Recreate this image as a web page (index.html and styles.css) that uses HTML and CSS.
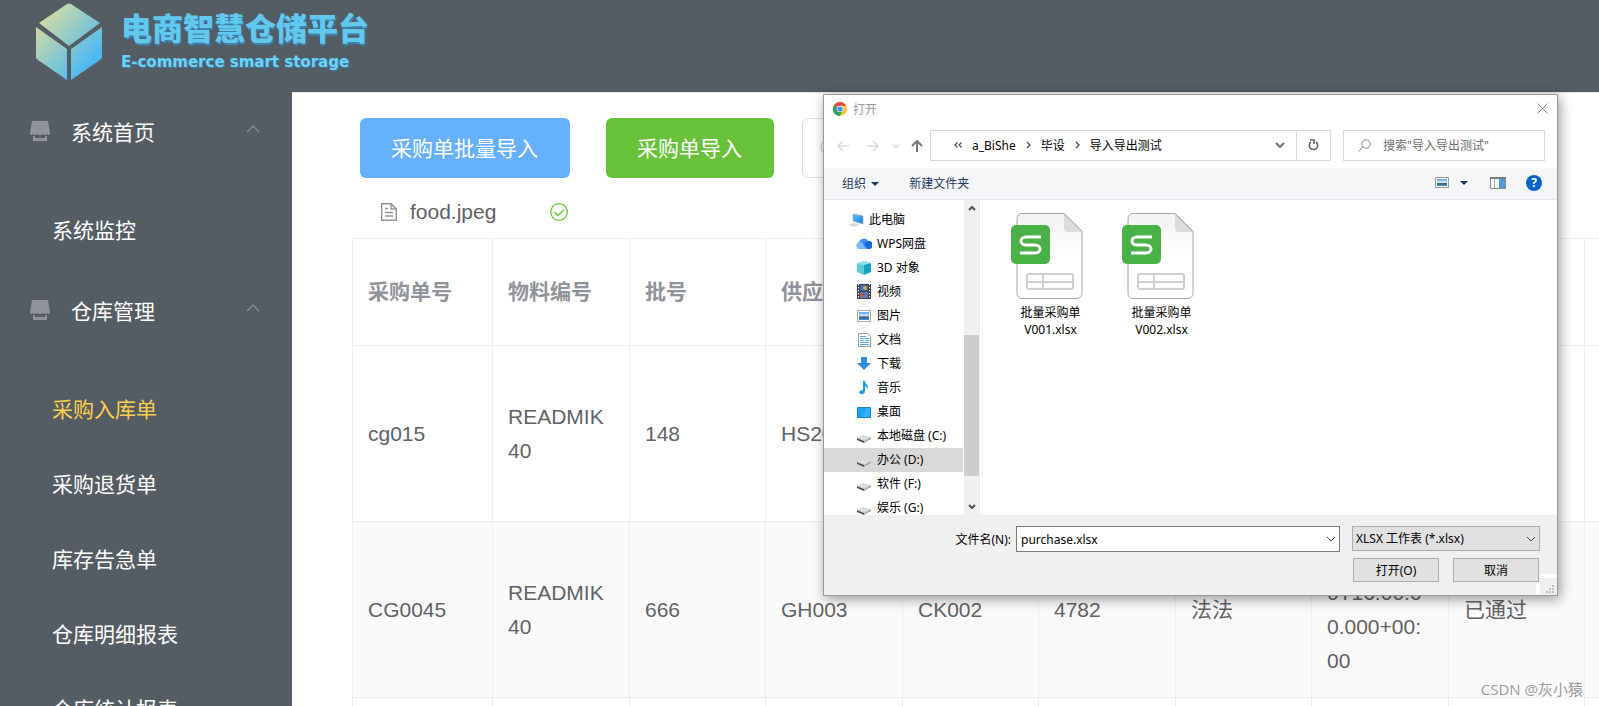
FILE: index.html
```html
<!DOCTYPE html>
<html lang="zh-CN">
  <head>
    <meta charset="UTF-8" />
    <meta name="viewport" content="width=device-width, initial-scale=1.0" />
    <title>电商智慧仓储平台</title>
    <link rel="stylesheet" href="styles.css">
  </head>
  <body>
    <!-- 公用图标 -->
    <svg class="sprite" aria-hidden="true">
      <defs>
        <linearGradient id="cube" gradientUnits="userSpaceOnUse" x1="2" y1="10" x2="58" y2="58">
          <stop offset="0" stop-color="#dde09b" />
          <stop offset="1" stop-color="#4cb8f5" />
        </linearGradient>
        <linearGradient id="paper" x1="0" y1="0" x2="0" y2="1">
          <stop offset="0" stop-color="#f2f2f2" />
          <stop offset="0.5" stop-color="#fff" />
        </linearGradient>
        <linearGradient id="sky" x1="0" y1="0" x2="0" y2="1">
          <stop offset="0" stop-color="#5aa0e8" />
          <stop offset="0.5" stop-color="#d8ecf8" />
          <stop offset="0.6" stop-color="#2f5f6a" />
          <stop offset="1" stop-color="#4b93c9" />
        </linearGradient>
        <linearGradient id="blue" x1="0" y1="0" x2="1" y2="1">
          <stop offset="0" stop-color="#5db8f2" />
          <stop offset="1" stop-color="#1b86dc" />
        </linearGradient>
      </defs>
      <symbol id="shop" viewBox="0 0 20 20">
        <path fill="#909399" d="M2 0h16l2 12c0 1-.5 2-1.500 2l-1.500-1-1.500 1h-1L13 13l-1.500 1h-1L10 13.500l-.5.500h-1L7 13l-1.500 1h-1L3 13l-1.500 1C.5 14 0 13 0 12zM3 15h2v2h10v-2h2v5H3z" />
      </symbol>
      <symbol id="up" viewBox="0 0 14 8">
        <path fill="none" stroke="#909399" stroke-width="1.2" d="M1 7l6-6 6 6" />
      </symbol>
      <symbol id="down" viewBox="0 0 10 6">
        <path fill="none" stroke="currentColor" d="M1 1l4 4 4-4" />
      </symbol>
      <symbol id="drive" viewBox="0 0 16 16">
        <path fill="#dcdcdc" d="M1 11l6-3 8 2-7 4z" />
        <path fill="#4c4f50" d="M1 11l7 3v2l-7-3z" />
        <path fill="#a9acad" d="M8 14l7-4v2l-7 4z" />
        <path fill="#35c46a" d="M2 12.500h1v1H2z" />
      </symbol>
      <symbol id="sheet" viewBox="0 0 80 88">
        <path fill="url(#paper)" stroke="#a6a6a6" d="M11 1.500h42l18 18v62a5 5 0 0 1-5 5H11a5 5 0 0 1-5-5v-75a5 5 0 0 1 5-5z" />
        <path fill="#dcdcdc" d="M53 2l18 18H57a4 4 0 0 1-4-4z" />
        <path fill="none" stroke="#a6a6a6" d="M53 1.500l18 18" />
        <rect x="0" y="13" width="39" height="39" rx="5" fill="#49b247" />
        <path fill="none" stroke="#fff" stroke-width="3" d="M30 25H15a5 4 0 0 0 0 8h9a5 4 0 0 1 0 8H9" />
        <g fill="none" stroke="#cfcfcf" stroke-width="2">
          <rect x="16" y="62" width="46" height="15" rx="2" />
          <path d="M16 70h46M32 62v15" />
        </g>
      </symbol>
    </svg>

    <header class="header">
      <svg class="logo" viewBox="0 0 66 78" aria-hidden="true">
        <g fill="url(#cube)">
          <path d="M31 1q2-1 4 0l29 19-31 23L3 20z" />
          <path d="M0 24l31 22v31L2 57q-2-1-2-3z" />
          <path d="M66 24L35 46v31l29-20q2-1 2-3z" />
        </g>
      </svg>
      <div class="brand">
        <h1>电商智慧仓储平台</h1>
        <p>E-commerce smart storage</p>
      </div>
    </header>

    <div class="container">
      <nav class="aside">
        <button class="menu_title" type="button">
          <svg class="menu_icon"><use href="#shop" /></svg>
          <span>系统首页</span>
          <svg class="menu_arrow"><use href="#up" /></svg>
        </button>
        <ul class="menu_list">
          <li><a href="#">系统监控</a></li>
        </ul>
        <button class="menu_title" type="button">
          <svg class="menu_icon"><use href="#shop" /></svg>
          <span>仓库管理</span>
          <svg class="menu_arrow"><use href="#up" /></svg>
        </button>
        <ul class="menu_list">
          <li><a class="active" href="#">采购入库单</a></li>
          <li><a href="#">采购退货单</a></li>
          <li><a href="#">库存告急单</a></li>
          <li><a href="#">仓库明细报表</a></li>
          <li><a href="#">仓库统计报表</a></li>
        </ul>
      </nav>

      <main class="main">
        <div class="toolbar">
          <button class="btn btn_primary" type="button">采购单批量导入</button>
          <button class="btn btn_success" type="button">采购单导入</button>
          <label class="search">
            <svg viewBox="0 0 20 20"><circle cx="9" cy="9" r="8" /><path d="M15 15l4 4" /></svg>
            <input type="text" aria-label="搜索" />
          </label>
        </div>
        <div class="upload_file">
          <svg class="file_icon" viewBox="0 0 16 18"><path d="M.7.7h9.600l5 5v11.600H.7zM10 .7V6h5M4 5.500h3M4 9.500h8M4 13h8" /></svg>
          <a href="#">food.jpeg</a>
          <svg class="ok_icon" viewBox="0 0 18 18"><circle cx="9" cy="9" r="8.300" /><path d="M4.500 9l3.500 3.500 6-6" /></svg>
        </div>
        <table class="table">
          <colgroup>
            <col class="first" /><col /><col /><col /><col /><col /><col /><col /><col /><col />
          </colgroup>
          <thead>
            <tr>
              <th>采购单号</th>
              <th>物料编号</th>
              <th>批号</th>
              <th>供应商</th>
              <th>仓库</th>
              <th>数量</th>
              <th>采购员</th>
              <th>日期</th>
              <th>状态</th>
              <th></th>
            </tr>
          </thead>
          <tbody>
            <tr>
              <td>cg015</td>
              <td>READMIK40</td>
              <td>148</td>
              <td>HS2001</td>
              <td></td>
              <td></td>
              <td></td>
              <td></td>
              <td></td>
              <td></td>
            </tr>
            <tr>
              <td>CG0045</td>
              <td>READMIK40</td>
              <td>666</td>
              <td>GH003</td>
              <td>CK002</td>
              <td>4782</td>
              <td>法法</td>
              <td>2020-12-10T16:00:00.000+00:00</td>
              <td>已通过</td>
              <td></td>
            </tr>
            <tr>
              <td></td><td></td><td></td><td></td><td></td><td></td><td></td><td></td><td></td><td></td>
            </tr>
          </tbody>
        </table>
      </main>
    </div>

    <!-- 打开文件对话框 -->
    <section class="dialog" role="dialog" aria-label="打开">
      <div class="dialog_title">
        <svg class="chrome" viewBox="0 0 14 14">
          <circle cx="7" cy="7" r="7" fill="#fbc934" />
          <path fill="#dc4a3e" d="M7 7L1 3.400A7 7 0 0 1 13.200 3.800H7z" />
          <path fill="#1da35c" d="M7 7l-6-3.600A7 7 0 0 0 6.500 14L10 8.500z" />
          <circle cx="7" cy="7" r="3.300" fill="#fff" />
          <circle cx="7" cy="7" r="2.600" fill="#4688f1" />
        </svg>
        <span>打开</span>
        <button class="close" type="button" aria-label="关闭">
          <svg viewBox="0 0 11 11"><path d="M.5.5l10 10M10.500.5l-10 10" /></svg>
        </button>
      </div>

      <div class="dialog_nav">
        <div class="arrows">
          <svg class="back" viewBox="0 0 12 12"><path d="M12 6H1M6 1L1 6l5 5" /></svg>
          <svg class="forward" viewBox="0 0 12 12"><path d="M0 6h11M6 1l5 5-5 5" /></svg>
          <svg class="recent" viewBox="0 0 6 4"><path d="M0 .5l3 3 3-3" /></svg>
          <svg class="parent" viewBox="0 0 12 12"><path d="M6 12V1M1 6l5-5 5 5" /></svg>
        </div>
        <div class="address">
          <div class="crumbs">
            <svg class="crumb_more" viewBox="0 0 8 6"><path d="M3.500.5L1 3l2.500 2.500M7.500.5L5 3l2.500 2.500" /></svg>
            <a href="#">a_BiShe</a>
            <svg class="crumb_sep" viewBox="0 0 5 8"><path d="M1 1l3 3-3 3" /></svg>
            <a href="#">毕设</a>
            <svg class="crumb_sep" viewBox="0 0 5 8"><path d="M1 1l3 3-3 3" /></svg>
            <a href="#">导入导出测试</a>
          </div>
          <svg class="address_drop" viewBox="0 0 10 6"><path d="M1 1l4 4 4-4" /></svg>
          <button class="refresh" type="button" aria-label="刷新">
            <svg viewBox="0 0 11 12"><path d="M8 3a4.200 4.200 0 1 1-5 0M2 1h4v4" /></svg>
          </button>
        </div>
        <label class="dialog_search">
          <svg viewBox="0 0 13 13"><circle cx="8" cy="5" r="4.200" /><path d="M5 8l-4.500 4.500" /></svg>
          <input type="text" placeholder='搜索"导入导出测试"' />
        </label>
      </div>

      <div class="dialog_tools">
        <button type="button">组织 <i class="caret"></i></button>
        <button type="button">新建文件夹</button>
        <div class="views">
          <svg class="view_icon" viewBox="0 0 14 11"><path fill="#fff" stroke="#9a9a9a" d="M.5.5h13v10H.5z" /><path fill="url(#sky)" d="M2 2h10v7H2z" /></svg>
          <i class="caret"></i>
          <svg class="pane_icon" viewBox="0 0 16 12"><path fill="#fff" stroke="#8a8a8a" d="M.5 1.500h15v10H.5z" /><path fill="#7b7b7b" d="M0 0h16v2H0z" /><path fill="#4a9de2" d="M9 2h6v9H9z" /><path stroke="#aaa" d="M4.500 2v9" /></svg>
          <button class="help" type="button" aria-label="帮助">?</button>
        </div>
      </div>

      <div class="dialog_body">
        <ul class="tree">
          <li class="root">
            <svg viewBox="0 0 16 16"><path fill="url(#blue)" stroke="#8fa3b0" stroke-width=".6" d="M5 3l10 2v8L5 10z" /><path fill="#d3d8dc" d="M0 14l6-2 6 2-5 2z" /></svg>
            此电脑
          </li>
          <li>
            <svg viewBox="0 0 16 16"><path fill="#3b8cf5" d="M4 14a4 4 0 0 1-1-7 5 5 0 0 1 9-1 4 4 0 0 1 1 8z" /><path fill="#7cb8ff" d="M4 14a3.500 3.500 0 1 1 3-5l3 5z" /><path fill="#1765dd" d="M8 9l4-3a4 4 0 0 1 1 8h-1z" /></svg>
            WPS网盘
          </li>
          <li>
            <svg viewBox="0 0 16 16"><path fill="#8be0ea" d="M1 4l8-2 6 2-7 2z" /><path fill="#5fcbd8" d="M1 4l7 2v10l-7-3z" /><path fill="#16a3bd" d="M8 6l7-2v9l-7 3z" /></svg>
            3D 对象
          </li>
          <li>
            <svg viewBox="0 0 16 16"><path fill="#3d3d3d" d="M1 1h14v15H1z" /><path fill="#376fc0" d="M4 2h8v6H4z" /><path fill="#5b7fc0" d="M4 9h8v6H4z" /><circle cx="9" cy="5" r="2" fill="#e4a334" /><circle cx="7" cy="12" r="2" fill="#c94b34" /><path stroke="#fff" stroke-dasharray="1.500 1.500" d="M2.500 1v15M13.500 1v15" /></svg>
            视频
          </li>
          <li>
            <svg viewBox="0 0 16 16"><path fill="#fff" stroke="#a9a9a9" d="M1.500 3.500h13v11h-13z" /><path fill="url(#sky)" d="M3 5h10v8H3z" /></svg>
            图片
          </li>
          <li>
            <svg viewBox="0 0 16 16"><path fill="#fff" stroke="#9b9b9b" d="M2.500 2.500h9l3 3v10h-12z" /><path stroke="#5aa5d9" d="M4 5.500h6M4 7.500h9M4 9.500h4M9 9.500h4M4 11.500h9M4 13.500h9" /></svg>
            文档
          </li>
          <li>
            <svg viewBox="0 0 16 16"><path fill="#2f8fdc" d="M5 2h6v6h4l-7 7-7-7h4z" /></svg>
            下载
          </li>
          <li>
            <svg viewBox="0 0 16 16"><path fill="#1f9bea" d="M7 2h2c0 3 4 4 3 8-1-2-2-2-3-3v5c0 2-1 3-3 3s-3-1-3-2 2-2 4-2z" /></svg>
            音乐
          </li>
          <li>
            <svg viewBox="0 0 16 16"><path fill="#1fa1f4" stroke="#1580cc" d="M1.500 4.500h13v10h-13z" /><path fill="#35b0fa" d="M10 5h4v9H6z" /></svg>
            桌面
          </li>
          <li><svg><use href="#drive" /></svg>本地磁盘 (C:)</li>
          <li class="selected"><svg><use href="#drive" /></svg>办公 (D:)</li>
          <li><svg><use href="#drive" /></svg>软件 (F:)</li>
          <li><svg><use href="#drive" /></svg>娱乐 (G:)</li>
        </ul>
        <div class="scrollbar">
          <svg class="scroll_arrow flip" viewBox="0 0 8 5"><path d="M1 1l3 3 3-3" /></svg>
          <div class="track"><div class="thumb"></div></div>
          <svg class="scroll_arrow" viewBox="0 0 8 5"><path d="M1 1l3 3 3-3" /></svg>
        </div>
        <div class="files">
          <figure class="file">
            <svg><use href="#sheet" /></svg>
            <figcaption>批量采购单<br />V001.xlsx</figcaption>
          </figure>
          <figure class="file">
            <svg><use href="#sheet" /></svg>
            <figcaption>批量采购单<br />V002.xlsx</figcaption>
          </figure>
        </div>
      </div>

      <form class="dialog_footer">
        <div class="name_row">
          <label for="filename">文件名(N):</label>
          <div class="field filename">
            <input id="filename" type="text" value="purchase.xlsx" />
            <svg><use href="#down" /></svg>
          </div>
          <div class="field filetype">
            <select aria-label="文件类型">
              <option>XLSX 工作表 (*.xlsx)</option>
            </select>
            <svg><use href="#down" /></svg>
          </div>
        </div>
        <div class="action_row">
          <button type="button">打开(O)</button>
          <button type="button">取消</button>
        </div>
        <div class="grip">
          <svg viewBox="0 0 8 8"><path fill="#bfbfbf" d="M6 0h2v2H6zM3 3h2v2H3zM6 3h2v2H6zM0 6h2v2H0zM3 6h2v2H3zM6 6h2v2H6z" /></svg>
        </div>
      </form>
    </section>

    <div class="watermark">CSDN @灰小猿</div>
  </body>
</html>
```

FILE: styles.css
```css
* {
  margin: 0;
  padding: 0;
  box-sizing: border-box;
}
body {
  height: 100vh;
  overflow: hidden;
  display: flex;
  flex-direction: column;
  background: #545c64;
  font-family: "Liberation Sans", "Noto Sans CJK SC", sans-serif;
  font-size: 21px;
  color: #606266;
}
button,
input,
select {
  font: inherit;
  color: inherit;
  border: none;
  outline: none;
  background: none;
}
a {
  color: inherit;
  text-decoration: none;
}
ul {
  list-style: none;
}
svg {
  display: block;
  flex-shrink: 0;
}
.sprite {
  position: absolute;
  width: 0;
  height: 0;
}

/* 头部 */
.header {
  display: flex;
  gap: 19px;
  flex-shrink: 0;
  height: 90px;
  padding: 3px 36px;
}
.logo {
  width: 66px;
  height: 78px;
}
.brand {
  padding-top: 6px;
}
.brand h1 {
  font-family: "Noto Sans CJK SC", sans-serif;
  font-size: 31px;
  font-weight: 900;
  line-height: 36px;
  color: #62c8ec;
  text-shadow: 1px 2px 1px #3d83b3;
}
.brand p {
  padding-top: 7px;
  font-family: "DejaVu Sans", sans-serif;
  font-size: 15px;
  font-weight: 700;
  line-height: 20px;
  color: #68d4f8;
  text-shadow: 1px 1px 1px #3d83b3;
}

/* 左侧菜单 */
.container {
  display: flex;
  flex: 1;
  min-height: 0;
}
.aside {
  flex-shrink: 0;
  width: 292px;
  overflow: hidden;
  color: #fff;
}
.menu_title {
  display: flex;
  align-items: center;
  width: 100%;
  height: 84px;
  padding: 0 32px 2px 30px;
}
.menu_icon {
  width: 20px;
  height: 20px;
  margin-right: 21px;
}
.menu_arrow {
  width: 14px;
  height: 8px;
  margin: 0 0 4px auto;
}
.menu_list {
  padding-top: 20px;
}
.menu_list a {
  display: block;
  height: 75px;
  padding-left: 52px;
  line-height: 74px;
}
.menu_list .active {
  color: #ffd04b;
}

/* 内容区 */
.main {
  flex: 1;
  min-width: 0;
  margin-top: 2px;
  padding: 25px 0 0 60px;
  overflow: hidden;
  border-top: 1px solid #e4e4e4;
  background: #fff;
}
.toolbar {
  display: flex;
  padding-left: 8px;
}
.btn {
  height: 60px;
  padding: 0 32px 2px 31px;
  border-radius: 6px;
  color: #fff;
}
.btn_primary {
  margin-right: 36px;
  background: #66b1ff;
}
.btn_success {
  margin-right: 28px;
  background: #67c23a;
}
.search {
  display: flex;
  align-items: center;
  width: 300px;
  padding: 0 17px;
  border: 1px solid #dcdfe6;
  border-radius: 6px;
}
.search svg {
  width: 20px;
  height: 20px;
  fill: none;
  stroke: #c0c4cc;
}
.search input {
  flex: 1;
  min-width: 0;
}
.upload_file {
  display: flex;
  align-items: center;
  height: 60px;
  padding: 7px 0 0 29px;
}
.upload_file svg {
  height: 18px;
  fill: none;
  stroke: #909399;
}
.file_icon {
  width: 16px;
  margin-right: 13px;
  stroke-width: 1.4;
}
.upload_file .ok_icon {
  width: 18px;
  margin-left: 54px;
  stroke: #67c23a;
  stroke-width: 1.3;
}
.table {
  width: 1370px;
  table-layout: fixed;
  border-collapse: separate;
  border-spacing: 0;
  border-top: 1px solid #ebeef5;
  border-left: 1px solid #ebeef5;
}
.table col {
  width: 136px;
}
.table col:nth-child(even) {
  width: 137px;
}
.table .first {
  width: 140px;
}
.table th,
.table td {
  height: 176px;
  padding: 0 18px 0 15px;
  border-right: 1px solid #ebeef5;
  border-bottom: 1px solid #ebeef5;
  line-height: 34px;
  text-align: left;
  word-break: break-all;
}
.table th {
  height: 107px;
  color: #909399;
}
.table tbody tr:nth-child(even) {
  background: #fafafa;
}

/* 对话框 */
.dialog {
  position: absolute;
  top: 94px;
  left: 823px;
  display: flex;
  flex-direction: column;
  width: 735px;
  height: 502px;
  border: 1px solid #999;
  background: #fff;
  box-shadow: 2px 3px 12px rgba(0, 0, 0, 0.4);
  font-family: "Noto Sans", "Noto Sans CJK SC", sans-serif;
  font-size: 12px;
  color: #000;
}
.dialog_title {
  display: flex;
  align-items: center;
  height: 29px;
  padding: 0 9px 2px;
  color: #999;
}
.chrome {
  width: 14px;
  height: 14px;
  margin-right: 6px;
}
.close {
  margin-left: auto;
}
.close svg {
  width: 11px;
  height: 11px;
  fill: none;
  stroke: #888;
}
.dialog_nav {
  display: flex;
  align-items: center;
  height: 44px;
  padding: 0 12px 2px 0;
}
.arrows {
  display: flex;
  align-items: center;
  width: 106px;
  padding: 2px 0 0 13px;
}
.arrows svg {
  width: 12px;
  height: 12px;
  fill: none;
  stroke: #dadada;
  stroke-width: 1.6;
}
.arrows .forward {
  margin-left: 18px;
}
.arrows .recent {
  width: 6px;
  height: 4px;
  margin: 0 12px 0 14px;
}
.arrows .parent {
  stroke: #757575;
  stroke-width: 2;
}
.address {
  display: flex;
  align-items: center;
  flex: 1;
  height: 31px;
  margin-right: 12px;
  border: 1px solid #d9d9d9;
}
.crumbs {
  display: flex;
  align-items: center;
  flex: 1;
  gap: 10px;
  padding-left: 23px;
}
.crumbs svg {
  fill: none;
  stroke: #444;
  stroke-width: 1.2;
}
.crumb_more {
  width: 8px;
  height: 6px;
}
.crumb_sep {
  width: 5px;
  height: 8px;
}
.address_drop {
  width: 10px;
  height: 6px;
  margin-right: 11px;
  fill: none;
  stroke: #6f6f6f;
  stroke-width: 2;
}
.refresh {
  display: flex;
  align-items: center;
  justify-content: center;
  width: 34px;
  height: 29px;
  border-left: 1px solid #d9d9d9;
}
.refresh svg {
  width: 11px;
  height: 12px;
  fill: none;
  stroke: #666;
  stroke-width: 1.6;
}
.dialog_search {
  display: flex;
  align-items: center;
  width: 202px;
  height: 31px;
  padding-left: 14px;
  border: 1px solid #d9d9d9;
}
.dialog_search svg {
  width: 13px;
  height: 13px;
  margin-right: 12px;
  fill: none;
  stroke: #8a8a8a;
}
.dialog_search input {
  flex: 1;
  min-width: 0;
}
.dialog_search input::placeholder {
  color: #6d6d6d;
}
.dialog_tools {
  display: flex;
  align-items: center;
  gap: 30px;
  height: 32px;
  padding: 0 15px 2px 18px;
  border-bottom: 1px solid #e6e8eb;
  background: #f5f6f8;
  color: #1e395b;
}
.caret {
  display: inline-block;
  margin-left: 2px;
  border: 4px solid transparent;
  border-top-color: #1e395b;
  border-bottom: none;
  vertical-align: middle;
}
.views {
  display: flex;
  align-items: center;
  margin-left: auto;
}
.views .caret {
  margin: 0 22px 0 11px;
}
.view_icon {
  width: 14px;
  height: 11px;
}
.pane_icon {
  width: 16px;
  height: 12px;
}
.help {
  width: 16px;
  height: 16px;
  margin-left: 20px;
  border-radius: 50%;
  background: #0a64c8;
  color: #fff;
  font-weight: 700;
  line-height: 16px;
}
.dialog_body {
  display: flex;
  flex: 1;
  min-height: 0;
  overflow: hidden;
}
.tree {
  width: 139px;
  padding-top: 8px;
  white-space: nowrap;
}
.tree li {
  display: flex;
  align-items: center;
  gap: 5px;
  height: 24px;
  padding: 0 0 2px 32px;
}
.tree .root {
  padding-left: 24px;
}
.tree .selected {
  background: #d9d9d9;
}
.tree svg {
  width: 16px;
  height: 16px;
}
.scrollbar {
  display: flex;
  flex-direction: column;
  align-items: center;
  width: 16px;
  margin-left: 1px;
  padding: 6px 0;
  background: #f0f0f0;
}
.scroll_arrow {
  width: 8px;
  height: 5px;
  fill: none;
  stroke: #505050;
  stroke-width: 2;
}
.flip {
  transform: rotate(180deg);
}
.track {
  display: flex;
  flex-direction: column;
  flex: 1;
  width: 16px;
  padding: 124px 1px 28px 0;
}
.thumb {
  flex: 1;
  background: #cdcdcd;
}
.files {
  display: flex;
  align-items: flex-start;
  flex: 1;
  margin-left: 2px;
  padding: 12px 0 0 12px;
  border-left: 1px solid #f5f5f5;
}
.file {
  display: flex;
  flex-direction: column;
  align-items: center;
  width: 111px;
}
.file svg {
  width: 80px;
  height: 88px;
}
.file figcaption {
  padding-top: 4px;
  line-height: 17px;
  text-align: center;
}
.dialog_footer {
  height: 80px;
  padding: 11px 17px 0 0;
  background: #f0f0f0;
}
.name_row {
  display: flex;
  align-items: center;
  justify-content: flex-end;
}
.name_row label {
  margin-right: 5px;
}
.field {
  position: relative;
  height: 26px;
}
.field input,
.field select {
  width: 100%;
  height: 26px;
  padding: 0 4px;
  border: 1px solid #7a7a7a;
  background: #fff;
}
.field svg {
  position: absolute;
  top: 10px;
  right: 4px;
  width: 10px;
  height: 6px;
  color: #444;
  pointer-events: none;
}
.filename {
  width: 324px;
  margin-right: 12px;
}
.filetype {
  width: 188px;
}
.field select {
  height: 25px;
  padding: 0 3px;
  border-color: #adadad;
  background: #e1e1e1;
  appearance: none;
}
.action_row {
  display: flex;
  justify-content: flex-end;
  gap: 14px;
  padding: 6px 1px 0 0;
}
.action_row button {
  width: 86px;
  height: 24px;
  padding-bottom: 1px;
  border: 1px solid #adadad;
  background: #e1e1e1;
}
.grip {
  position: absolute;
  right: 0;
  bottom: 0;
  padding: 7px 3px 2px 6px;
  background: #f0f0f0;
  box-shadow: 0 -4px 0 #fff, -4px 4px 0 #fff;
  clip-path: inset(-4px 0 0 -4px);
}
.grip svg {
  width: 8px;
  height: 8px;
}

.watermark {
  position: absolute;
  right: 16px;
  bottom: 7px;
  font-family: "Open Sans", "Noto Sans CJK SC", sans-serif;
  font-size: 15px;
  color: #999;
  text-shadow: 1px 1px 0 #fff;
}
```
